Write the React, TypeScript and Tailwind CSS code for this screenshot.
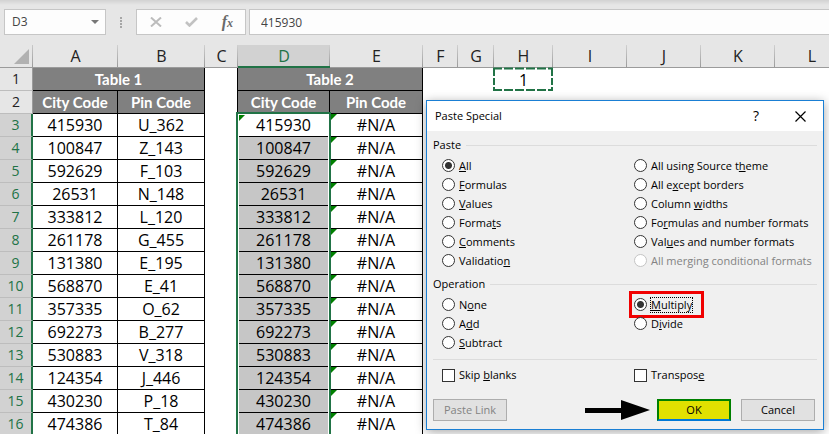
import type { ReactNode } from "react";
import clsx from "clsx";

const columns = [
  { name: "A", width: "w-[85px]" },
  { name: "B", width: "w-[87px]" },
  { name: "C", width: "w-[33px]" },
  { name: "D", width: "w-[92px]" },
  { name: "E", width: "w-[93px]" },
  { name: "F", width: "w-[35px]" },
  { name: "G", width: "w-[36px]" },
  { name: "H", width: "w-[59px]" },
  { name: "I", width: "w-[74px]" },
  { name: "J", width: "w-[74px]" },
  { name: "K", width: "w-[74px]" },
  { name: "L", width: "w-[74px]" },
];

const rows = [
  { city: "415930", pin: "U_362" },
  { city: "100847", pin: "Z_143" },
  { city: "592629", pin: "F_103" },
  { city: "26531", pin: "N_148" },
  { city: "333812", pin: "L_120" },
  { city: "261178", pin: "G_455" },
  { city: "131380", pin: "E_195" },
  { city: "568870", pin: "E_41" },
  { city: "357335", pin: "O_62" },
  { city: "692273", pin: "B_277" },
  { city: "530883", pin: "V_318" },
  { city: "124354", pin: "J_446" },
  { city: "430230", pin: "P_18" },
  { city: "474386", pin: "T_84" },
];

type Option = { id: string; label: ReactNode; disabled?: boolean };

const pasteLeft: Option[] = [
  { id: "all", label: <><u>A</u>ll</> },
  { id: "formulas", label: <><u>F</u>ormulas</> },
  { id: "values", label: <><u>V</u>alues</> },
  { id: "formats", label: <>Forma<u>t</u>s</> },
  { id: "comments", label: <><u>C</u>omments</> },
  { id: "validation", label: <>Validatio<u>n</u></> },
];

const pasteRight: Option[] = [
  { id: "theme", label: <>All using Source t<u>h</u>eme</> },
  { id: "no-borders", label: <>All e<u>x</u>cept borders</> },
  { id: "widths", label: <>Column <u>w</u>idths</> },
  { id: "formulas-num", label: <>Fo<u>r</u>mulas and number formats</> },
  { id: "values-num", label: <>Val<u>u</u>es and number formats</> },
  { id: "merge-cond", label: <>All merging conditional formats</>, disabled: true },
];

const operationLeft: Option[] = [
  { id: "none", label: <>N<u>o</u>ne</> },
  { id: "add", label: <>A<u>d</u>d</> },
  { id: "subtract", label: <><u>S</u>ubtract</> },
];

const operationRight: Option[] = [
  { id: "multiply", label: <><u>M</u>ultiply</> },
  { id: "divide", label: <>D<u>i</u>vide</> },
];

function FormulaBar() {
  return (
    <div className="flex h-[45px] items-start bg-[#e6e6e6] bg-[linear-gradient(#d2d2d2,#e6e6e6_5px)] pt-[9px] pl-1 font-['Open_Sans','Noto_Sans',sans-serif] text-xs text-[#444]">
      <div className="flex h-[26px] w-[102px] items-center border border-[#c6c6c6] bg-[#fdfdfd]">
        <input aria-label="Name box" defaultValue="D3" className="w-20 pl-[7px] outline-none" />
        <button aria-label="Show names" className="pl-[6px]">
          <svg width="8" height="4" viewBox="0 0 8 4" fill="#777">
            <path d="M0 0h8L4 4z" />
          </svg>
        </button>
      </div>
      <svg className="mx-[14px] mt-2 shrink-0" width="2" height="11" viewBox="0 0 2 11" fill="#a6a6a6">
        <path d="M0 0h2v2H0zM0 3h2v2H0zM0 6h2v2H0zM0 9h2v2H0z" />
      </svg>
      <div className="flex h-[26px] w-[110px] shrink-0 items-center justify-between border border-[#c6c6c6] bg-[#fdfdfd] pr-3 pl-[13px]">
        <button aria-label="Cancel entry">
          <svg width="12" height="10" viewBox="0 0 12 10" fill="none" stroke="#bcbcbc" strokeWidth="2">
            <path d="M1 .5 11 9.5M11 .5 1 9.5" />
          </svg>
        </button>
        <button aria-label="Enter">
          <svg width="13" height="10" viewBox="0 0 13 10" fill="none" stroke="#c2c2c2" strokeWidth="2.6">
            <path d="M1 5l3.5 3.5L12 1" />
          </svg>
        </button>
        <button aria-label="Insert function" className="font-['Liberation_Serif',serif] text-base leading-4 font-bold text-[#6a6a6a] italic">
          f<span className="text-xs">x</span>
        </button>
      </div>
      <input
        aria-label="Formula bar"
        defaultValue="415930"
        className="ml-[3px] h-[26px] min-w-0 flex-1 border border-r-0 border-[#c6c6c6] bg-[#fdfdfd] pl-[11px] outline-none"
      />
    </div>
  );
}

function ErrorMark({ inset }: { inset?: boolean }) {
  return (
    <svg
      className={clsx("absolute left-px", inset ? "top-px" : "top-0")}
      width="6"
      height="6"
      viewBox="0 0 6 6"
      fill="#008000"
    >
      <path d="M0 0h6L0 6z" />
    </svg>
  );
}

function Sheet() {
  const heading = "border-r border-b border-black bg-[#808080] font-['Lato','Noto_Sans',sans-serif] text-[15px] font-bold leading-5 text-white";
  const cell = "border-r border-b border-black";

  return (
    <div className="relative">
      <table className="w-[849px] table-fixed border-separate border-spacing-0 text-center font-['Open_Sans','Noto_Sans',sans-serif] text-base leading-5 text-black">
        <colgroup>
          <col className="w-[33px]" />
          {columns.map((c) => (
            <col key={c.name} className={c.width} />
          ))}
        </colgroup>
        <thead className="text-[#222]">
          <tr className="h-[23px]">
            <td className="border-b border-[#9b9b9b] bg-[#e6e6e6] bg-[linear-gradient(#c8c8c8,#9b9b9b)] bg-[length:1px_100%] bg-right bg-no-repeat">
              <svg className="ml-[14px]" width="15" height="15" viewBox="0 0 15 15" fill="#b1b1b1">
                <path d="M15 0v15H0z" />
              </svg>
            </td>
            {columns.map((c) => (
              <th
                key={c.name}
                scope="col"
                className={clsx(
                  "bg-[linear-gradient(#d0d0d0,#9b9b9b)] bg-[length:1px_100%] bg-right bg-no-repeat font-normal",
                  c.name === "D"
                    ? "border-b-2 border-[#217346] bg-[#d2d2d2] text-[#217346]"
                    : "border-b border-[#9b9b9b] bg-[#e6e6e6]"
                )}
              >
                {c.name}
              </th>
            ))}
          </tr>
        </thead>
        <tbody>
          <tr className="h-[23px]">
            <RowHeader n={1} />
            <th colSpan={2} className={heading}>Table 1</th>
            <td className="border-r border-black" />
            <th colSpan={2} className={heading}>Table 2</th>
            <td />
            <td />
            <td>1</td>
            <td colSpan={4} />
          </tr>
          <tr className="h-[23px]">
            <RowHeader n={2} />
            <th className={heading}>City Code</th>
            <th className={heading}>Pin Code</th>
            <td className="border-r border-black" />
            <th className={heading}>City Code</th>
            <th className={heading}>Pin Code</th>
            <td colSpan={7} />
          </tr>
          {rows.map((row, i) => (
            <tr key={row.city} className="h-[23px]">
              <RowHeader n={i + 3} selected />
              <td className={cell}>{row.city}</td>
              <td className={cell}>{row.pin}</td>
              <td />
              <td className={clsx(cell, "relative", i > 0 && "bg-[#c6c6c6]")}>
                {i === 0 && <ErrorMark inset />}
                {row.city}
              </td>
              <td className={clsx(cell, "relative")}>
                <ErrorMark />
                #N/A
              </td>
              <td colSpan={7} />
            </tr>
          ))}
        </tbody>
      </table>

      {/* selection outline of column D */}
      <div className="pointer-events-none absolute top-[67px] bottom-0 left-[236px] w-[95px] border-2 border-b-0 border-[#217346]">
        <div className="h-full border-x border-white" />
      </div>

      {/* copied cell H1 */}
      <svg className="pointer-events-none absolute top-[22px] left-[493px]" width="60" height="24" fill="none" stroke="#217346" strokeWidth="2" strokeDasharray="9 2">
        <path d="M0 1.5H60M0 23H60" />
        <path d="M1 2V24M59 2V24" strokeDasharray="7 2" />
      </svg>
    </div>
  );
}

function RowHeader({ n, selected }: { n: number; selected?: boolean }) {
  return (
    <th
      scope="row"
      className={clsx(
        "border-b text-sm font-normal",
        selected
          ? "border-r-2 border-r-[#217346] border-b-[#bdbdbd] bg-[#d2d2d2] text-[#217346]"
          : "border-r border-r-[#9b9b9b] border-b-[#bdbdbd] bg-[#e6e6e6] text-[#222]"
      )}
    >
      {n}
    </th>
  );
}

function SectionTitle({ children }: { children: ReactNode }) {
  return (
    <div className="flex h-4 items-center gap-[5px]">
      <h3>{children}</h3>
      <div className="h-px flex-1 bg-[#dcdcdc]" />
    </div>
  );
}

function RadioList({ group, options, checked }: { group: string; options: Option[]; checked?: string }) {
  return (
    <div className="flex flex-col items-start">
      {options.map((o) => (
        <label
          key={o.id}
          className={clsx("relative flex h-[19px] items-center gap-1 whitespace-nowrap", o.disabled && "text-[#838383]")}
        >
          <input
            type="radio"
            name={group}
            defaultChecked={o.id === checked}
            disabled={o.disabled}
            className="size-[13px] appearance-none rounded-full border border-[#333] bg-white checked:bg-[radial-gradient(circle,#333_3px,#fff_4px)] disabled:border-[#c4c4c4]"
          />
          <span className={clsx("leading-[14px]", o.id === "multiply" && "outline-1 outline-black outline-dotted")}>{o.label}</span>
          {o.id === "multiply" && (
            <span className="pointer-events-none absolute -top-1 -right-3 -bottom-1 -left-[5px] border-3 border-[#f00000]" />
          )}
        </label>
      ))}
    </div>
  );
}

function CheckOption({ children }: { children: ReactNode }) {
  return (
    <label className="flex items-center gap-1">
      <input type="checkbox" className="size-[13px] appearance-none border border-[#333] bg-white" />
      <span>{children}</span>
    </label>
  );
}

function PasteSpecial() {
  const button = "h-[22px] w-[74px] border border-[#adadad] bg-[#e1e1e1]";
  const twoColumns = "grid grid-cols-[192px_1fr] pl-[9px]";

  return (
    <div
      role="dialog"
      aria-label="Paste Special"
      className="absolute top-[100px] left-[426px] w-[398px] border border-[#1a7fd4] bg-[#f0f0f0] font-['Open_Sans','Noto_Sans',sans-serif] text-[11px] leading-4 text-black shadow-[0_2px_10px_rgba(0,0,0,0.35)]"
    >
      <div className="flex h-[30px] items-center bg-white pr-[17px] pl-2">
        <h2 className="flex-1">Paste Special</h2>
        <button aria-label="Help" className="mr-4 w-10 text-sm">?</button>
        <button aria-label="Close" className="flex w-[14px] justify-end pl-1">
          <svg className="shrink-0" width="11" height="11" viewBox="0 0 11 11" fill="none" stroke="#000" strokeWidth="1.2">
            <path d="M.5.5l10 10M10.5.5l-10 10" />
          </svg>
        </button>
      </div>

      <div className="px-[6px] pt-[6px] pb-2">
        <SectionTitle>Paste</SectionTitle>
        <div className={clsx(twoColumns, "mt-[3px] mb-[6px]")}>
          <RadioList group="paste" options={pasteLeft} checked="all" />
          <RadioList group="paste" options={pasteRight} />
        </div>
        <SectionTitle>Operation</SectionTitle>
        <div className={clsx(twoColumns, "mt-[3px] border-b border-[#dcdcdc] pb-[7px]")}>
          <RadioList group="operation" options={operationLeft} />
          <RadioList group="operation" options={operationRight} checked="multiply" />
        </div>
        <div className={clsx(twoColumns, "mt-[7px]")}>
          <CheckOption>Skip <u>b</u>lanks</CheckOption>
          <CheckOption>Transpos<u>e</u></CheckOption>
        </div>
        <div className="mt-4 flex items-center pr-[2px]">
          <button disabled className={clsx(button, "text-[#838383]")}>Paste Link</button>
          <svg className="mr-[7px] ml-auto" width="65" height="20" viewBox="0 0 65 20">
            <path d="M0 8h36V0l29 10-29 10v-7H0z" />
          </svg>
          <button className="h-[22px] w-[74px] border-2 border-[#008000] border-b-[#0078d7] bg-[#e1e100]">OK</button>
          <button className={clsx(button, "ml-[10px]")}>Cancel</button>
        </div>
      </div>
    </div>
  );
}

export default function App() {
  return (
    <main className="relative h-screen overflow-hidden bg-white">
      <FormulaBar />
      <Sheet />
      <PasteSpecial />
    </main>
  );
}
